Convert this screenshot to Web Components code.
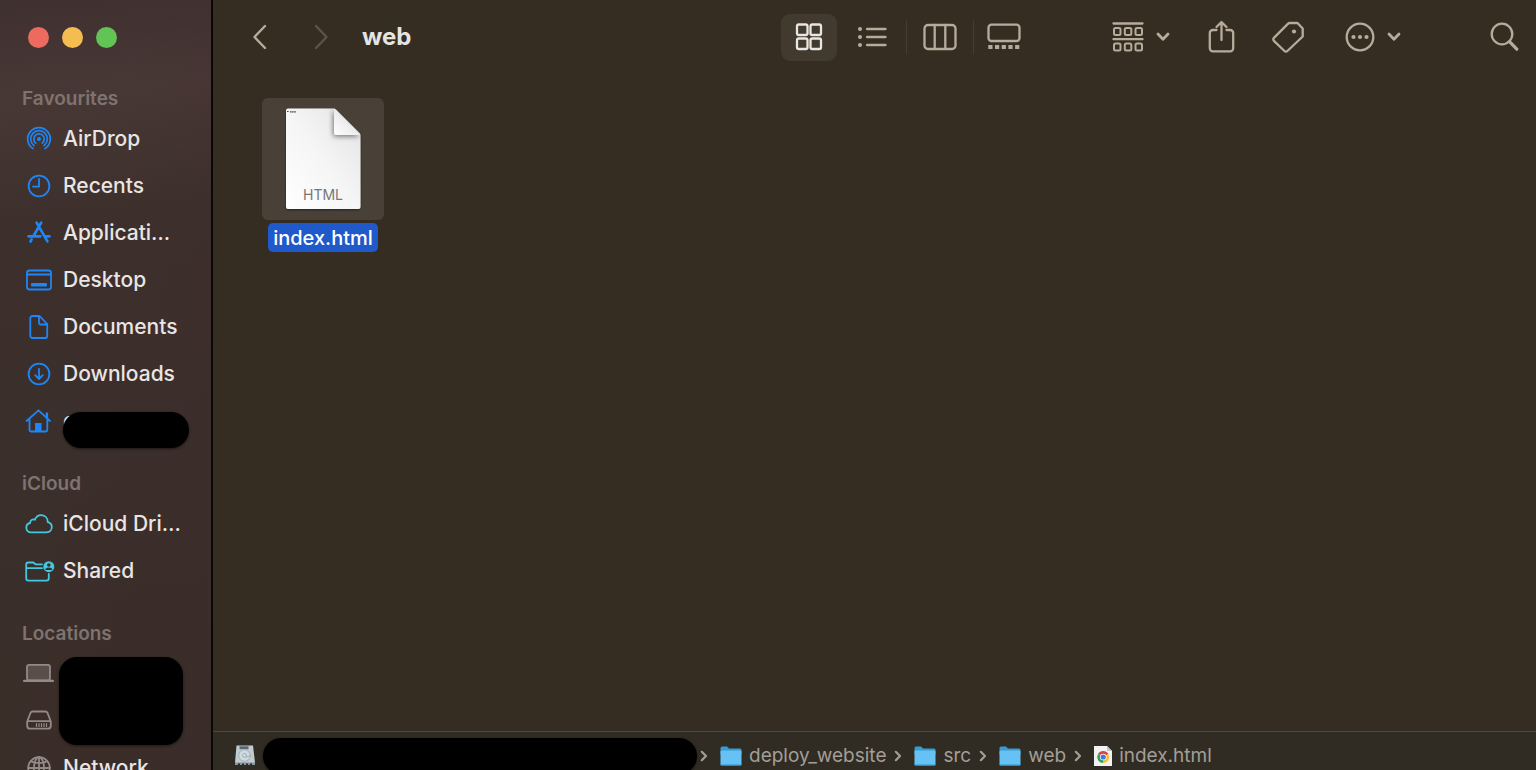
<!DOCTYPE html>
<html lang="en">
<head>
<meta charset="UTF-8">
<meta name="viewport" content="width=device-width, initial-scale=1.0">
<title>web</title>
<style>
  body {
    margin: 0;
    height: 100vh;
    overflow: hidden;
    background: #352d22;
    font-family: Inter, "Liberation Sans", sans-serif;
  }
</style>
</head>
<body>
<finder-window>
  <finder-sidebar slot="sidebar">
    <sidebar-section heading="Favourites">
      <sidebar-item icon="airdrop">AirDrop</sidebar-item>
      <sidebar-item icon="recents">Recents</sidebar-item>
      <sidebar-item icon="applications">Applicati…</sidebar-item>
      <sidebar-item icon="desktop">Desktop</sidebar-item>
      <sidebar-item icon="documents">Documents</sidebar-item>
      <sidebar-item icon="downloads">Downloads</sidebar-item>
      <sidebar-item icon="home">c<hidden-block slot="cover" class="name"></hidden-block></sidebar-item>
    </sidebar-section>
    <sidebar-section heading="iCloud">
      <sidebar-item icon="cloud" tone="teal">iCloud Dri…</sidebar-item>
      <sidebar-item icon="shared" tone="teal">Shared</sidebar-item>
    </sidebar-section>
    <sidebar-section heading="Locations">
      <sidebar-item icon="laptop" tone="grey"><hidden-block slot="cover" class="devices"></hidden-block></sidebar-item>
      <sidebar-item icon="drive" tone="grey"></sidebar-item>
      <sidebar-item icon="globe" tone="grey">Network</sidebar-item>
    </sidebar-section>
  </finder-sidebar>

  <finder-toolbar slot="toolbar">web</finder-toolbar>

  <file-item kind="HTML">index.html</file-item>

  <path-bar slot="path">
    <path-crumb icon="disk"><hidden-block class="path"></hidden-block></path-crumb>
    <path-crumb icon="folder">deploy_website</path-crumb>
    <path-crumb icon="folder">src</path-crumb>
    <path-crumb icon="folder">web</path-crumb>
    <path-crumb icon="chrome" last>index.html</path-crumb>
  </path-bar>
</finder-window>

<script>
  // name: [width, height, markup]
  const ICONS = {
    airdrop: [34, 34, `<g stroke-width="1.7"><path d="M11 26.6a11.3 11.3 0 1 1 12 0"/><path d="M12 23.6a8.3 8.3 0 1 1 10 0"/><path d="M13.7 21.1a5.2 5.2 0 1 1 6.6 0"/></g><circle cx="17" cy="17" r="2" fill="currentColor" stroke="none"/>`],
    recents: [34, 34, `<circle cx="17" cy="17" r="10.4"/><path d="M17 10v7.6h-6"/>`],
    applications: [34, 34, `<g stroke-width="2.7"><path d="M19.2 6.6 11.8 19.5M14.6 6.6 25.4 25.4M6.5 20.3h11.8M23.2 20.3h4.3M9.6 23.4 8.5 25.5"/></g>`],
    desktop: [34, 34, `<rect x="5" y="7.5" width="24" height="19" rx="2.5"/><path d="M5 11.5h24"/><rect x="9" y="20" width="16" height="3.4" rx="1" fill="currentColor" stroke="none"/>`],
    documents: [34, 34, `<path d="M10.3 6h7.2l7.7 8v12a2 2 0 0 1-2 2H10.3a2 2 0 0 1-2-2V8a2 2 0 0 1 2-2zM17 6v7a1.5 1.5 0 0 0 1.5 1.5h6.4"/>`],
    downloads: [34, 34, `<circle cx="17" cy="17" r="10.4"/><path d="M17 11.8v10M13.2 18.2l3.8 3.8 3.8-3.8"/>`],
    home: [34, 34, `<path d="M4.6 17 16.5 6.3 28 17M7.5 15v11a1.5 1.5 0 0 0 1.5 1.5h14.8a1.5 1.5 0 0 0 1.5-1.5V15"/><path d="M13 19h6.5v8H13zM23.7 8.6h2.4V15l-2.4-2z" fill="currentColor" stroke="none"/>`],
    cloud: [34, 34, `<path d="M9.3 25.3c-3 0-5-2-5-4.6 0-2.5 1.7-4.3 3.8-4.7-.2-2.6 2.5-4.4 4.7-3.2 1.3-3 3.4-4.6 6.2-4.6 4 0 6.7 3 6.8 7 2.5.6 4 2.4 4 4.8 0 3-2.2 5.3-5.2 5.3z"/>`],
    shared: [34, 34, `<path d="M20 10.3h-6.5l-2.2-1.8H6.5a2.3 2.3 0 0 0-2.3 2.3v13.5a2.3 2.3 0 0 0 2.3 2.3h18a2.3 2.3 0 0 0 2.3-2.3V20M4.2 14.2H20"/><circle cx="26.8" cy="12.7" r="5.5" fill="currentColor" stroke="none"/><g fill="#3b2f2c" stroke="none"><circle cx="26.8" cy="11" r="1.8"/><path d="M23.2 15.9c.6-3.2 6.6-3.2 7.2 0z"/></g>`],
    laptop: [34, 34, `<rect x="5" y="7.8" width="23" height="15.5" rx="2" fill="#5a4e4b"/><path d="M2 23.8h29" stroke-width="2.2"/>`],
    drive: [34, 34, `<path d="M10.6 7.5h12.8c1 0 1.7.5 2.1 1.4l3.3 8.6v4.2a3 3 0 0 1-3 3H8.2a3 3 0 0 1-3-3v-4.2l3.3-8.6c.4-.9 1.1-1.4 2.1-1.4zM5.4 17.2h23.2"/><path d="M14.5 19.5v3M17 19.5v3M19.500 19.5v3M22 19.5v3M24.5 19.5v3" stroke-width="1.2"/>`],
    globe: [34, 34, `<circle cx="17" cy="17" r="10.8"/><ellipse cx="17" cy="17" rx="5" ry="10.8"/><path d="M17 6v22M6.2 17h21.6M9 10.2c4 2.6 12 2.6 16 0"/>`],

    back: [15, 26, `<path d="M13 2 2.5 13 13 24" stroke-width="2.4"/>`],
    forward: [15, 26, `<path d="M2 2l10.5 11L2 24" stroke-width="2.4"/>`],
    grid: [28, 28, `<rect x="2" y="1.5" width="10.5" height="10.5" rx="1.8"/><rect x="15.5" y="1.5" width="10.5" height="10.5" rx="1.8"/><rect x="2" y="15.5" width="10.5" height="10.5" rx="1.8"/><rect x="15.5" y="15.5" width="10.5" height="10.5" rx="1.8"/>`],
    list: [30, 24, `<path d="M10 4h18.500M10 12h18.500M10 20h18.500"/><g fill="currentColor" stroke="none"><circle cx="3" cy="4" r="2"/><circle cx="3" cy="12" r="2"/><circle cx="3" cy="20" r="2"/></g>`],
    columns: [34, 28, `<rect x="1.5" y="2" width="31" height="24" rx="3.5"/><path d="M11.7 2v24M22.3 2v24"/>`],
    gallery: [34, 28, `<rect x="1.5" y="1.7" width="31" height="16.300" rx="3"/><path d="M1.300 24h31.500" stroke-width="4.2" stroke-linecap="butt" stroke-dasharray="4.2 2.5"/>`],
    group: [32, 32, `<path d="M1.5 2.500h29M1.5 18.200h29"/><g stroke-width="2"><rect x="2" y="7" width="6.5" height="7" rx="1.5"/><rect x="12.8" y="7" width="6.5" height="7" rx="1.5"/><rect x="23.5" y="7" width="6.5" height="7" rx="1.5"/><rect x="2" y="22.5" width="6.5" height="7" rx="1.5"/><rect x="12.8" y="22.5" width="6.5" height="7" rx="1.5"/><rect x="23.5" y="22.5" width="6.5" height="7" rx="1.5"/></g>`],
    down: [14, 10, `<path d="M2 2l5 5.3L12 2" stroke-width="2.8"/>`],
    share: [28, 34, `<path d="M9.5 10H5.8a3 3 0 0 0-3 3v15.3a3 3 0 0 0 3 3h17.4a3 3 0 0 0 3-3V13a3 3 0 0 0-3-3h-3.700M14.5 20V2.500M9.500 7l5-5 5 5"/>`],
    tag: [36, 34, `<path d="M17.5 3h8l5.200 5.500v8L15.4 31a2 2 0 0 1-2.9 0L1.900 20.800a2 2 0 0 1 0-2.900L16.100 3.600a2 2 0 0 1 1.400-.6z"/><circle cx="22" cy="11.500" r="2.100" fill="currentColor" stroke="none"/>`],
    more: [30, 30, `<circle cx="15" cy="15" r="13.3"/><g fill="currentColor" stroke="none"><circle cx="8.5" cy="15" r="2.1"/><circle cx="15" cy="15" r="2.1"/><circle cx="21.5" cy="15" r="2.1"/></g>`],
    search: [29, 30, `<circle cx="12" cy="12" r="10.3"/><path d="M19.5 19.7l7.3 7.5" stroke-width="3.2"/>`],

    next: [8, 12, `<path d="M1.8 1.8 6 6 1.8 10.2" stroke-width="2.2"/>`],
    disk: [22, 24, `<path d="M2.5 1.5h16.500l2 17v2.500H1V18.500z" fill="#c0cbd2" stroke="none"/><path d="M1 18.500h20V21H1z" fill="#8a959b" stroke="none"/><path d="M5.500 2.300h9v2.900h-9z" fill="#5c676e" stroke="none"/><g stroke="#a0b0b9" stroke-width="1"><circle cx="10.500" cy="11.500" r="5.800" fill="#d0dade"/><circle cx="10.500" cy="11.500" r="2"/><path d="M12 13l5-1"/></g><path d="M4 20.500h2M8 20.500h2M12 20.500h2M16 20.500h2" stroke="#2b2d2d" stroke-width="1.800" stroke-linecap="butt"/>`],
    folder: [22, 20, `<path d="M.5 2A1.500 1.500 0 0 1 2 .5h5l2 2h11A1.500 1.500 0 0 1 21.500 4v4H.5z" fill="#389bd2" stroke="none"/><rect x=".5" y="4.500" width="21" height="15" rx="1.200" fill="#66c2f5" stroke="none"/><path d="M1 18.700h20" stroke="#43a5dc" stroke-width="1"/>`],
    chrome: [18, 22, `<path d="M0 1h13l5 5v15H0z" fill="#f2f2f2" stroke="none"/><path d="M13 1l5 5h-5z" fill="#c5c5c5" stroke="none"/><g stroke="none"><path d="M9.200 12 4 9a6 6 0 0 1 10.400 0z" fill="#dc4437"/><path d="M9.200 12 14.400 9a6 6 0 0 1-5.200 9z" fill="#f5c12e"/><path d="M9.200 12v6A6 6 0 0 1 4 9z" fill="#389d56"/><circle cx="9.200" cy="12" r="3.300" fill="#fff"/><circle cx="9.200" cy="12" r="2.600" fill="#3c78e6"/></g>`]
  };

  function icon(name) {
    const [w, h, shape] = ICONS[name];
    return `<svg width="${w}" height="${h}" viewBox="0 0 ${w} ${h}" fill="none" stroke="currentColor" stroke-width="2" stroke-linecap="round" stroke-linejoin="round" aria-hidden="true">${shape}</svg>`;
  }

  class FinderWindow extends HTMLElement {
    constructor() {
      super();
      this.attachShadow({ mode: "open" });
    }

    connectedCallback() {
      this.shadowRoot.innerHTML = `
        <style>
          :host {
            display: grid;
            grid-template-columns: 213px minmax(0, 1fr);
            height: 100vh;
          }
          .content {
            display: grid;
            grid-template-rows: 74px minmax(0, 1fr) auto;
            min-height: 0;
          }
          .files {
            display: flex;
            flex-wrap: wrap;
            align-items: flex-start;
            align-content: flex-start;
            gap: 24px;
            padding: 24px 44px;
          }
        </style>
        <slot name="sidebar"></slot>
        <div class="content">
          <slot name="toolbar"></slot>
          <main class="files"><slot></slot></main>
          <slot name="path"></slot>
        </div>
      `;
    }
  }

  class FinderSidebar extends HTMLElement {
    constructor() {
      super();
      this.attachShadow({ mode: "open" });
    }

    connectedCallback() {
      this.shadowRoot.innerHTML = `
        <style>
          :host {
            display: block;
            height: 100vh;
            box-sizing: border-box;
            overflow: hidden;
            border-right: 2px solid #090707;
            background:
              linear-gradient(100deg, transparent 40%, rgba(60, 36, 38, .2)),
              linear-gradient(175deg, #3f3030 0, #483835 100px, #3d302c 220px, #3b2f2b 60%, #3a2e29);
          }
          .lights {
            display: flex;
            gap: 13px;
            padding: 27px 28px 34px;
          }
          .lights button {
            width: 21px;
            height: 21px;
            padding: 0;
            border: 0;
            border-radius: 50%;
          }
          .close { background: #ed6a5e; }
          .minimise { background: #f5bd4f; }
          .zoom { background: #61c454; }
          nav {
            display: flex;
            flex-direction: column;
            gap: 23px;
          }
        </style>
        <div class="lights">
          <button class="close" aria-label="Close"></button>
          <button class="minimise" aria-label="Minimise"></button>
          <button class="zoom" aria-label="Zoom"></button>
        </div>
        <nav><slot></slot></nav>
      `;
    }
  }

  class SidebarSection extends HTMLElement {
    constructor() {
      super();
      this.attachShadow({ mode: "open" });
    }

    connectedCallback() {
      this.shadowRoot.innerHTML = `
        <style>
          :host { display: block; }
          h2 {
            margin: 0;
            padding-left: 22px;
            font-size: 19px;
            font-weight: 600;
            line-height: 33px;
            color: #7f7370;
          }
        </style>
        <h2>${this.getAttribute("heading")}</h2>
        <slot></slot>
      `;
    }
  }

  class SidebarItem extends HTMLElement {
    constructor() {
      super();
      this.attachShadow({ mode: "open" });
    }

    connectedCallback() {
      this.shadowRoot.innerHTML = `
        <style>
          :host {
            display: block;
            position: relative;
            --tone: #1e86f7;
          }
          :host([tone="teal"]) { --tone: #43c8e0; }
          :host([tone="grey"]) { --tone: #938a87; }
          a {
            display: flex;
            align-items: center;
            gap: 7px;
            height: 47px;
            padding-left: 22px;
            font-size: 21px;
            font-weight: 500;
            color: #e9e5e4;
            text-decoration: none;
            white-space: nowrap;
          }
          svg {
            flex: none;
            color: var(--tone);
            stroke-width: 1.8;
          }
        </style>
        <a href="#">${icon(this.getAttribute("icon"))}<span><slot></slot></span></a>
        <slot name="cover"></slot>
      `;
    }
  }

  // black block drawn over private names
  class HiddenBlock extends HTMLElement {
    constructor() {
      super();
      this.attachShadow({ mode: "open" });
    }

    connectedCallback() {
      this.shadowRoot.innerHTML = `
        <style>
          :host {
            display: block;
            background: #000;
            border-radius: 18px;
            box-shadow: 0 1px 3px rgba(0, 0, 0, .5);
          }
          :host(.name) {
            position: absolute;
            z-index: 1;
            left: 63px;
            top: 15px;
            width: 126px;
            height: 36px;
          }
          :host(.devices) {
            position: absolute;
            z-index: 1;
            left: 59px;
            top: 7px;
            width: 124px;
            height: 88px;
          }
          :host(.path) {
            width: 434px;
            height: 36px;
          }
        </style>
      `;
    }
  }

  class FinderToolbar extends HTMLElement {
    constructor() {
      super();
      this.attachShadow({ mode: "open" });
    }

    connectedCallback() {
      this.shadowRoot.innerHTML = `
        <style>
          :host {
            display: flex;
            align-items: center;
            padding: 0 17px 0 39px;
            color: #b7ab9b;
          }
          button {
            display: flex;
            align-items: center;
            justify-content: center;
            gap: 12px;
            padding: 0;
            border: 0;
            background: none;
            color: inherit;
          }
          svg {
            flex: none;
            stroke-width: 2.3;
          }
          .history {
            display: flex;
            gap: 47px;
          }
          .history button:disabled { color: #5d5447; }
          h1 {
            flex: 1;
            margin: 0 0 0 33px;
            font-size: 24px;
            font-weight: 700;
            line-height: 32px;
            color: #e6e4e0;
          }
          .views {
            display: grid;
            grid-template-columns: 56px 69px 67px 60px;
            align-items: center;
            margin-right: 79px;
          }
          .views button { height: 34px; }
          .views .line { border-left: 1px solid #453d32; }
          .views .active {
            height: 47px;
            border-radius: 9px;
            background: #423a2f;
            color: #e8e6e2;
          }
          .actions {
            display: flex;
            align-items: center;
            gap: 37px;
          }
          .search { margin-left: 52px; }
        </style>
        <div class="history">
          <button aria-label="Back">${icon("back")}</button>
          <button aria-label="Forward" disabled>${icon("forward")}</button>
        </div>
        <h1><slot></slot></h1>
        <div class="views">
          <button class="active" aria-label="Icons">${icon("grid")}</button>
          <button aria-label="List">${icon("list")}</button>
          <button class="line" aria-label="Columns">${icon("columns")}</button>
          <button class="line" aria-label="Gallery">${icon("gallery")}</button>
        </div>
        <div class="actions">
          <button aria-label="Group">${icon("group")}${icon("down")}</button>
          <button aria-label="Share">${icon("share")}</button>
          <button aria-label="Tags">${icon("tag")}</button>
          <button aria-label="More">${icon("more")}${icon("down")}</button>
          <button class="search" aria-label="Search">${icon("search")}</button>
        </div>
      `;
    }
  }

  class FileItem extends HTMLElement {
    constructor() {
      super();
      this.attachShadow({ mode: "open" });
    }

    connectedCallback() {
      this.shadowRoot.innerHTML = `
        <style>
          :host { display: block; }
          a {
            display: flex;
            flex-direction: column;
            align-items: center;
            gap: 3px;
            width: 132px;
            color: #fff;
            text-decoration: none;
          }
          .tile {
            display: flex;
            align-items: center;
            justify-content: center;
            width: 122px;
            height: 122px;
            border-radius: 6px;
            background: #494137;
          }
          .name {
            padding: 1px 5px 0;
            border-radius: 5px;
            background: #2059c9;
            font-size: 20px;
            font-weight: 500;
            line-height: 28px;
          }
        </style>
        <a href="#">
          <span class="tile">
            <svg width="80" height="108" viewBox="0 0 80 108">
              <defs>
                <linearGradient id="sheet" x1="0" y1="1" x2="1" y2="0">
                  <stop offset="0" stop-color="#fff"/>
                  <stop offset=".5" stop-color="#f5f5f5"/>
                  <stop offset="1" stop-color="#e2e2e2"/>
                </linearGradient>
                <linearGradient id="fold" x1="0" y1="1" x2=".6" y2=".4">
                  <stop offset="0" stop-color="#fff"/>
                  <stop offset="1" stop-color="#e6e6e6"/>
                </linearGradient>
                <filter id="soft" x="-30%" y="-30%" width="160%" height="160%">
                  <feDropShadow dx="0" dy="1" stdDeviation="1.2" flood-opacity=".5"/>
                </filter>
                <filter id="curl" x="-50%" y="-50%" width="200%" height="200%">
                  <feDropShadow dx="-1" dy="1.5" stdDeviation="2.5" flood-opacity=".5"/>
                </filter>
                <clipPath id="edge"><path d="M3 3h49l26 27v74H3z"/></clipPath>
              </defs>
              <path d="M5 3.500h45.500c1 0 1.800.3 2.500 1l23.500 23.500c.7.700 1 1.500 1 2.500V102a2 2 0 0 1-2 2H5a2 2 0 0 1-2-2V5.500a2 2 0 0 1 2-2z" fill="url(#sheet)" filter="url(#soft)"/>
              <g clip-path="url(#edge)"><path d="M51 3.500 77.500 30H53.500A2.500 2.500 0 0 1 51 27.500z" fill="url(#fold)" filter="url(#curl)"/></g>
              <path d="M4 6.500h2M7 6.800h6" stroke="#444" stroke-width="1.2" stroke-dasharray="1.6 .5"/>
              <text x="40" y="95" text-anchor="middle" font-size="14" fill="#777">${this.getAttribute("kind")}</text>
            </svg>
          </span>
          <span class="name"><slot></slot></span>
        </a>
      `;
    }
  }

  class PathBar extends HTMLElement {
    constructor() {
      super();
      this.attachShadow({ mode: "open" });
    }

    connectedCallback() {
      this.shadowRoot.innerHTML = `
        <style>
          :host {
            display: flex;
            gap: 12px;
            height: 32px;
            overflow: hidden;
            padding: 6px 21px 0;
            border-top: 1px solid #514a3e;
            background: #312c23;
          }
        </style>
        <slot></slot>
      `;
    }
  }

  class PathCrumb extends HTMLElement {
    constructor() {
      super();
      this.attachShadow({ mode: "open" });
    }

    connectedCallback() {
      const last = this.hasAttribute("last");
      this.shadowRoot.innerHTML = `
        <style>
          :host {
            display: flex;
            flex: none;
            align-items: center;
            gap: 8px;
            height: 36px;
            color: #a39e97;
          }
          :host(:first-child) { gap: 3px; }
          a {
            display: flex;
            align-items: center;
            gap: 7px;
            font-size: 19px;
            line-height: 24px;
            color: inherit;
            text-decoration: none;
          }
          svg { flex: none; }
        </style>
        <a href="#">${icon(this.getAttribute("icon"))}<slot></slot></a>
        ${last ? "" : icon("next")}
      `;
    }
  }

  customElements.define("finder-window", FinderWindow);
  customElements.define("finder-sidebar", FinderSidebar);
  customElements.define("sidebar-section", SidebarSection);
  customElements.define("sidebar-item", SidebarItem);
  customElements.define("hidden-block", HiddenBlock);
  customElements.define("finder-toolbar", FinderToolbar);
  customElements.define("file-item", FileItem);
  customElements.define("path-bar", PathBar);
  customElements.define("path-crumb", PathCrumb);
</script>
</body>
</html>
